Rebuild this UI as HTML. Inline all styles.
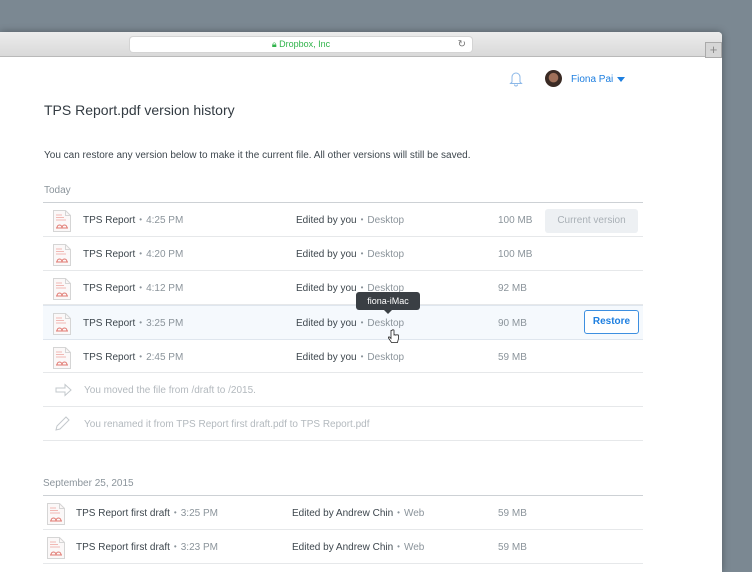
<!DOCTYPE html>
<html><head><style>
*{margin:0;padding:0;box-sizing:border-box}
body{width:752px;height:564px;overflow:hidden;background:#7b8892;font-family:"Liberation Sans",sans-serif;position:relative}
.win{position:absolute;left:0;top:32px;width:722px;height:540px;background:#fff;box-shadow:0 0 8px rgba(0,0,0,.35);border-radius:0 4px 0 0}
.tb{position:absolute;left:0;top:0;width:722px;height:25px;background:linear-gradient(#ececec,#d9d9d9);border-bottom:1px solid #b9b9b9;border-radius:0 4px 0 0}
.addr{position:absolute;left:130px;top:5px;width:342px;height:15px;background:#fff;border-radius:3px;box-shadow:0 0 0 1px #d4d4d4;font-size:9px;color:#2fb34a;text-align:center;line-height:15px}
.plus{position:absolute;left:705px;top:10px;width:17px;height:16px;background:#d6d6d6;border:1px solid #aaa;color:#888;font-size:13px;line-height:13px;text-align:center}
.t{position:absolute;white-space:nowrap;font-size:10px;color:#3d464d}
.g{color:#8b949b}
.row{position:absolute;left:43px;width:600px;height:34px;border-bottom:1px solid #e6e8ea}
.ic{position:absolute;left:10px;top:7px;width:18px;height:22px}
.row .t{top:12px}
.d{margin:0 4px;font-size:8px;position:relative;top:-1px}
</style></head><body>
<div class="win">
<div class="tb"><div class="addr">🔒︎ Dropbox, Inc<span style="position:absolute;right:6px;color:#777;font-size:10px">↻</span></div></div>
<div class="plus">+</div>
</div>
<svg style="position:absolute;left:509px;top:71px" width="14" height="16" viewBox="0 0 14 16"><path d="M3 11V6a4 4 0 018 0v5l1.5 1.5h-11z M5.5 13.5a1.5 1.5 0 003 0" fill="none" stroke="#8cb8e8" stroke-width="1"/></svg>
<div style="position:absolute;left:545px;top:70px;width:17px;height:17px;border-radius:50%;background:radial-gradient(circle at 50% 45%,#a0705a 0 35%,#3a2a24 40%)"></div>
<div class="t" style="left:571px;top:74px;font-size:10px;color:#1e7fe0">Fiona Pai</div>
<div style="position:absolute;left:617px;top:77px;border:4px solid transparent;border-top:5px solid #1e7fe0"></div>
<div class="t" style="left:44px;top:102px;font-size:14px;color:#333b42">TPS Report.pdf version history</div>
<div class="t" style="left:44px;top:150px;font-size:10px">You can restore any version below to make it the current file. All other versions will still be saved.</div>
<div class="t g" style="left:44px;top:185px;font-size:10px">Today</div>
<div style="position:absolute;left:43px;top:202px;width:600px;height:1px;background:#cdd1d5"></div>

<svg width="0" height="0" style="position:absolute"><defs><g id="pdf"><path d="M.5 .5h12l5 5v16h-17z" fill="#fbf8f8" stroke="#d5d5d5"/><path d="M12.5 .5v5h5" fill="none" stroke="#d5d5d5"/><path d="M3 5h6M3 7.5h8M3 10h10" stroke="#f1b8b4" stroke-width="1"/><path d="M3 18h12M4 18c0-4 5-4 5 0c0-4 5-4 5 0" fill="none" stroke="#e0776f" stroke-width="1"/></g></defs></svg>

<div class="row" style="top:203px"><svg class="ic"><use href="#pdf"/></svg><div class="t" style="left:40px">TPS Report<span class="g d">•</span><span class="g">4:25 PM</span></div><div class="t" style="left:253px">Edited by you<span class="g d">•</span><span class="g">Desktop</span></div><div class="t g" style="left:455px">100 MB</div><div style="position:absolute;left:502px;top:6px;width:93px;height:24px;background:#edf0f3;border-radius:3px;color:#a9b0b6;font-size:10px;text-align:center;line-height:24px">Current version</div></div>
<div class="row" style="top:237px"><svg class="ic"><use href="#pdf"/></svg><div class="t" style="left:40px">TPS Report<span class="g d">•</span><span class="g">4:20 PM</span></div><div class="t" style="left:253px">Edited by you<span class="g d">•</span><span class="g">Desktop</span></div><div class="t g" style="left:455px">100 MB</div></div>
<div class="row" style="top:271px"><svg class="ic"><use href="#pdf"/></svg><div class="t" style="left:40px">TPS Report<span class="g d">•</span><span class="g">4:12 PM</span></div><div class="t" style="left:253px">Edited by you<span class="g d">•</span><span class="g">Desktop</span></div><div class="t g" style="left:455px">92 MB</div></div>
<div class="row" style="top:305px;background:#f5f9fd;border-top:1px solid #dfe6ee;border-bottom:1px solid #dfe6ee;height:35px"><svg class="ic"><use href="#pdf"/></svg><div class="t" style="left:40px">TPS Report<span class="g d">•</span><span class="g">3:25 PM</span></div><div class="t" style="left:253px">Edited by you<span class="g d">•</span><span class="g">Desktop</span></div><div class="t g" style="left:455px">90 MB</div><div style="position:absolute;left:541px;top:4px;width:55px;height:24px;background:#fff;border:1px solid #3d8fe0;border-radius:3px;color:#1e7fe0;font-weight:bold;font-size:10px;text-align:center;line-height:22px">Restore</div></div>
<div class="row" style="top:340px;height:33px"><svg class="ic"><use href="#pdf"/></svg><div class="t" style="left:40px">TPS Report<span class="g d">•</span><span class="g">2:45 PM</span></div><div class="t" style="left:253px">Edited by you<span class="g d">•</span><span class="g">Desktop</span></div><div class="t g" style="left:455px">59 MB</div></div>
<div class="row" style="top:373px"><svg style="position:absolute;left:12px;top:10px" width="18" height="14"><path d="M1 5h9V1.5l6 5.5-6 5.5V9H1z" fill="none" stroke="#c3c8cc"/></svg><div class="t" style="left:41px;color:#b3b9be">You moved the file from /draft to /2015.</div></div>
<div class="row" style="top:407px"><svg style="position:absolute;left:11px;top:9px" width="16" height="16"><path d="M2 14l1-4 9-9 3 3-9 9z" fill="none" stroke="#c3c8cc"/></svg><div class="t" style="left:41px;color:#b3b9be">You renamed it from TPS Report first draft.pdf to TPS Report.pdf</div></div>

<div class="t g" style="left:43px;top:478px;font-size:10px">September 25, 2015</div>
<div style="position:absolute;left:43px;top:495px;width:600px;height:1px;background:#cdd1d5"></div>
<div class="row" style="top:496px"><svg class="ic" style="left:4px"><use href="#pdf"/></svg><div class="t" style="left:33px">TPS Report first draft<span class="g d">•</span><span class="g">3:25 PM</span></div><div class="t" style="left:249px">Edited by Andrew Chin<span class="g d">•</span><span class="g">Web</span></div><div class="t g" style="left:455px">59 MB</div></div>
<div class="row" style="top:530px"><svg class="ic" style="left:4px"><use href="#pdf"/></svg><div class="t" style="left:33px">TPS Report first draft<span class="g d">•</span><span class="g">3:23 PM</span></div><div class="t" style="left:249px">Edited by Andrew Chin<span class="g d">•</span><span class="g">Web</span></div><div class="t g" style="left:455px">59 MB</div></div>

<div style="position:absolute;left:356px;top:292px;width:64px;height:18px;background:#3a3f44;border-radius:3px;color:#fff;font-size:9px;text-align:center;line-height:18px">fiona-iMac</div>
<div style="position:absolute;left:384px;top:310px;border:4px solid transparent;border-top:4px solid #3a3f44"></div>
<svg style="position:absolute;left:388px;top:329px" width="12" height="16"><path d="M3 1.5v8l-1.5-1.5c-1-.5-1.5.5-1 1l3 4.5h6l1-4v-3c0-1-1.5-1-1.5 0c0-1-1.5-1-1.5 0c0-1-1.5-1-1.5 0v-5c0-1-2-1-2 0z" fill="#fff" stroke="#222" stroke-width=".8"/></svg>
</body></html>
